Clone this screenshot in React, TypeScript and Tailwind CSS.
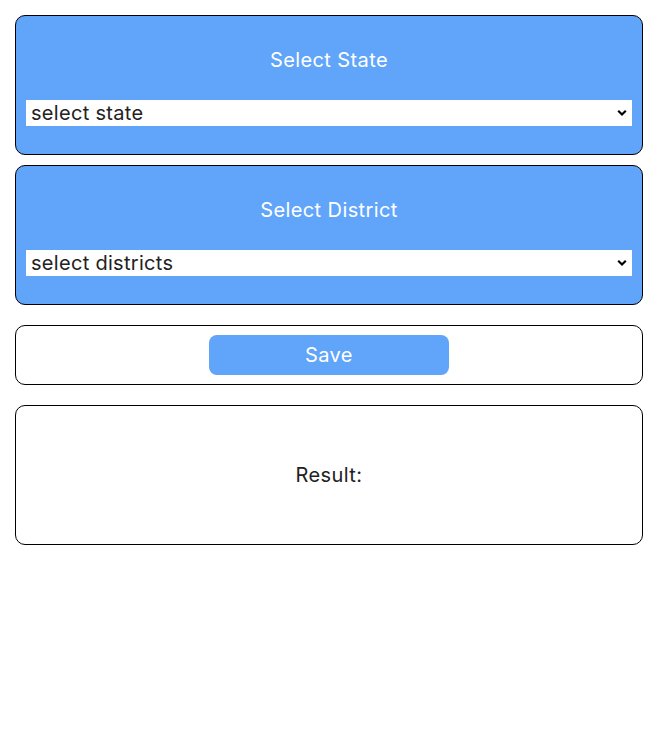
import React from "react";

function Chevron() {
  return (
    <svg className="pointer-events-none absolute right-[5px] top-1/2 -translate-y-1/2" width="10" height="7" viewBox="0 0 10 7">
      <path d="M1.2 1.2 L5 5 L8.8 1.2" fill="none" stroke="#000" strokeWidth="2.2" />
    </svg>
  );
}

function SelectCard({ title, placeholder }: { title: string; placeholder: string }) {
  return (
    <div className="rounded-[10px] border border-black bg-[#60a5fa] px-[10px] pt-[32px] pb-[28px]">
      <h2 className="text-center text-[20px] leading-[24px] tracking-[0.4px] text-white">{title}</h2>
      <div className="relative mt-[28px]">
        <select className="block h-[26px] w-full appearance-none bg-white pl-[5px] text-[20px] leading-[26px] tracking-[0.3px] text-[#222] outline-none">
          <option>{placeholder}</option>
        </select>
        <Chevron />
      </div>
    </div>
  );
}

export default function App() {
  return (
    <div className="min-h-[745px] bg-white pt-[15px] pl-[15px] pr-[12px]" style={{ fontFamily: "Inter, 'Noto Sans', sans-serif" }}>
      <div className="flex flex-col">
        <SelectCard title="Select State" placeholder="select state" />
        <div className="mt-[10px]">
          <SelectCard title="Select District" placeholder="select districts" />
        </div>
        <div className="mt-[20px] flex h-[60px] items-center justify-center rounded-[10px] border border-black">
          <button className="h-[40px] w-[240px] rounded-[8px] bg-[#60a5fa] text-[20px] tracking-[0.4px] text-white">Save</button>
        </div>
        <div className="mt-[20px] flex h-[140px] items-center justify-center rounded-[10px] border border-black">
          <span className="text-[20px] tracking-[0.4px] text-[#222]">Result:</span>
        </div>
      </div>
    </div>
  );
}
